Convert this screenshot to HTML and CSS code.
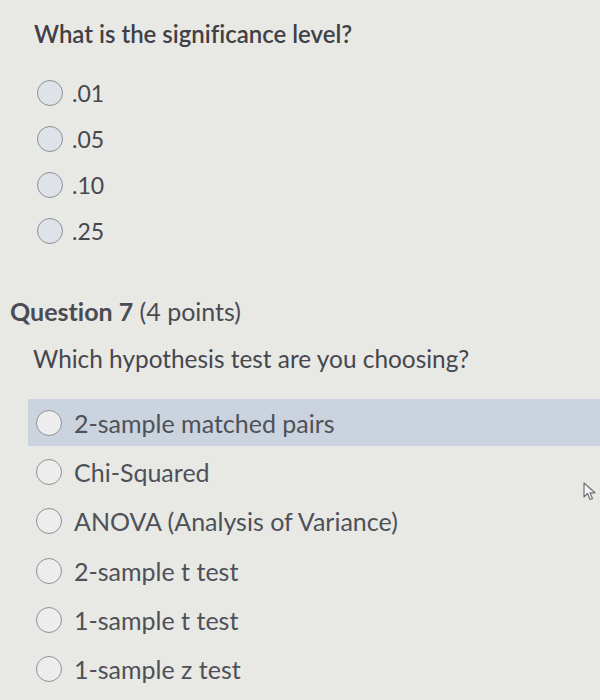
FILE: index.html
```html
<!DOCTYPE html>
<html lang="en">
<head>
<meta charset="utf-8">
<title>Quiz</title>
<link rel="stylesheet" href="styles.css">
</head>
<body>
<main class="page">
  <section class="q1">
    <h2 class="prompt prompt-top">What is the significance level?</h2>
    <ul class="opts opts-top">
      <li class="opt"><span class="radio filled"></span><span class="label">.01</span></li>
      <li class="opt"><span class="radio filled"></span><span class="label">.05</span></li>
      <li class="opt"><span class="radio filled"></span><span class="label">.10</span></li>
      <li class="opt"><span class="radio filled"></span><span class="label">.25</span></li>
    </ul>
  </section>
  <section class="q7">
    <h3 class="qhead"><strong>Question 7</strong> (4 points)</h3>
    <p class="prompt prompt-q7">Which hypothesis test are you choosing?</p>
    <ul class="opts opts-q7">
      <li class="opt opt-lg hover"><span class="radio"></span><span class="label">2-sample matched pairs</span></li>
      <li class="opt opt-lg"><span class="radio"></span><span class="label">Chi-Squared</span></li>
      <li class="opt opt-lg"><span class="radio"></span><span class="label">ANOVA (Analysis of Variance)</span></li>
      <li class="opt opt-lg"><span class="radio"></span><span class="label">2-sample t test</span></li>
      <li class="opt opt-lg"><span class="radio"></span><span class="label">1-sample t test</span></li>
      <li class="opt opt-lg"><span class="radio"></span><span class="label">1-sample z test</span></li>
    </ul>
  </section>
  <svg class="cursor" width="14" height="19" viewBox="0 0 14 19" aria-hidden="true">
    <path d="M1 1 L1 15 L4.5 11.5 L7 17.5 L9.5 16.5 L7 10.8 L12 10.8 Z" fill="#f4f4f2" stroke="#6f7277" stroke-width="1.2" stroke-linejoin="round"/>
  </svg>
</main>
</body>
</html>
```
FILE: styles.css
```css
html, body {
  margin: 0;
  padding: 0;
  background: #e8e8e5;
}
body {
  font-family: Lato, "Open Sans", sans-serif;
  color: #46484d;
  font-variant-ligatures: none;
}
.page {
  position: relative;
  width: 600px;
  height: 700px;
  overflow: hidden;
  background: #e8e8e5;
}
.q1 {
  padding: 18px 0 0 34px;
}
.prompt {
  margin: 0;
}
.prompt-top {
  font-size: 24px;
  line-height: 32px;
  color: #3f4146;
  font-weight: 600;
}
.opts {
  list-style: none;
  margin: 0;
  padding: 0;
}
.opts-top {
  margin-top: 28px;
  display: flex;
  flex-direction: column;
  gap: 16px;
}
.opt {
  display: flex;
  align-items: center;
  gap: 9px;
}
.opts-top .opt {
  height: 30px;
  margin-left: 3px;
}
.opts-top .radio {
  width: 26px;
  height: 26px;
}
.opts-top .label {
  font-size: 23px;
  color: #45474d;
}
.radio {
  box-sizing: border-box;
  width: 26px;
  height: 26px;
  border-radius: 50%;
  border: 1.5px solid #8e9197;
  background: #ecedec;
  flex: none;
}
.radio.filled {
  background: #dde3e8;
}
.q7 {
  padding-top: 50px;
}
.qhead {
  margin: 0 0 0 10px;
  font-size: 25px;
  line-height: 30px;
  font-weight: 400;
  color: #4a4c52;
}
.qhead strong {
  font-weight: 700;
}
.prompt-q7 {
  margin: 18px 0 0 33px;
  font-size: 24.4px;
  line-height: 30px;
  font-weight: 400;
  color: #45474d;
}
.opts-q7 {
  margin-top: 25px;
  margin-left: 28px;
}
.opt-lg {
  height: 49.3px;
  padding-left: 8px;
  gap: 12px;
}
.opt-lg .label {
  font-size: 25px;
  color: #4e5157;
}
.opt-lg.hover {
  height: 47px;
  margin-bottom: 1.5px;
  background: #cad3de;
}
.cursor {
  position: absolute;
  left: 583px;
  top: 482px;
}
```
